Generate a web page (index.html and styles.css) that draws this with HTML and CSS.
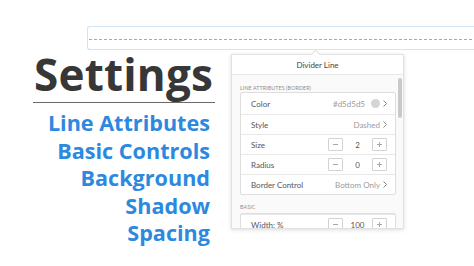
FILE: index.html
```html
<!DOCTYPE html>
<html>
<head>
<meta charset="utf-8">
<link rel="stylesheet" href="styles.css">
</head>
<body>
<div class="page">
  <div class="topbar"><div class="dashline"></div></div>
  <div class="stage">
    <div class="intro">
      <h1 class="title">Settings</h1>
      <ul class="topics">
        <li>Line Attributes</li>
        <li>Basic Controls</li>
        <li>Background</li>
        <li>Shadow</li>
        <li>Spacing</li>
      </ul>
    </div>
    <div class="panel">
      <div class="panel-head">Divider Line</div>
      <div class="panel-body">
        <div class="panel-scroll">
          <div class="section-label">Line Attributes (Border)</div>
          <div class="card">
            <div class="row row-first">
              <span class="row-label">Color</span>
              <span class="row-value"><span class="muted">#d5d5d5</span><span class="swatch"></span><svg class="chev" width="4" height="7" viewBox="0 0 4 7"><polyline points="0.5,0.5 3.5,3.5 0.5,6.5" fill="none" stroke="#8a8a8a" stroke-width="1"/></svg></span>
            </div>
            <div class="row">
              <span class="row-label">Style</span>
              <span class="row-value"><span class="muted">Dashed</span><svg class="chev" width="4" height="7" viewBox="0 0 4 7"><polyline points="0.5,0.5 3.5,3.5 0.5,6.5" fill="none" stroke="#8a8a8a" stroke-width="1"/></svg></span>
            </div>
            <div class="row">
              <span class="row-label">Size</span>
              <span class="stepper"><span class="step"><svg width="7" height="7" viewBox="0 0 7 7"><line x1="1" y1="3.5" x2="6" y2="3.5" stroke="#a8a8a8" stroke-width="1"/></svg></span><span class="step-value">2</span><span class="step"><svg width="7" height="7" viewBox="0 0 7 7"><line x1="1" y1="3.5" x2="6" y2="3.5" stroke="#a8a8a8" stroke-width="1"/><line x1="3.5" y1="1" x2="3.5" y2="6" stroke="#a8a8a8" stroke-width="1"/></svg></span></span>
            </div>
            <div class="row">
              <span class="row-label">Radius</span>
              <span class="stepper"><span class="step"><svg width="7" height="7" viewBox="0 0 7 7"><line x1="1" y1="3.5" x2="6" y2="3.5" stroke="#a8a8a8" stroke-width="1"/></svg></span><span class="step-value">0</span><span class="step"><svg width="7" height="7" viewBox="0 0 7 7"><line x1="1" y1="3.5" x2="6" y2="3.5" stroke="#a8a8a8" stroke-width="1"/><line x1="3.5" y1="1" x2="3.5" y2="6" stroke="#a8a8a8" stroke-width="1"/></svg></span></span>
            </div>
            <div class="row">
              <span class="row-label">Border Control</span>
              <span class="row-value"><span class="muted">Bottom Only</span><svg class="chev" width="4" height="7" viewBox="0 0 4 7"><polyline points="0.5,0.5 3.5,3.5 0.5,6.5" fill="none" stroke="#8a8a8a" stroke-width="1"/></svg></span>
            </div>
          </div>
          <div class="section-label section-label-spaced">Basic</div>
          <div class="card">
            <div class="row">
              <span class="row-label">Width: %</span>
              <span class="stepper"><span class="step"><svg width="7" height="7" viewBox="0 0 7 7"><line x1="1" y1="3.5" x2="6" y2="3.5" stroke="#a8a8a8" stroke-width="1"/></svg></span><span class="step-value">100</span><span class="step"><svg width="7" height="7" viewBox="0 0 7 7"><line x1="1" y1="3.5" x2="6" y2="3.5" stroke="#a8a8a8" stroke-width="1"/><line x1="3.5" y1="1" x2="3.5" y2="6" stroke="#a8a8a8" stroke-width="1"/></svg></span></span>
            </div>
          </div>
        </div>
        <div class="scrollbar"></div>
      </div>
    </div>
  </div>
</div>
</body>
</html>
```

FILE: styles.css
```css
html, body {
  margin: 0;
  padding: 0;
  background: #ffffff;
}
body {
  width: 474px;
  height: 266px;
  overflow: hidden;
  font-family: Lato, "Liberation Sans", sans-serif;
}
.page {
  width: 474px;
  height: 266px;
  overflow: hidden;
}
.topbar {
  margin-left: 87px;
  margin-top: 26px;
  border: 1px solid #d2e4f1;
  border-right: none;
  border-radius: 3px 0 0 3px;
  padding-top: 12px;
  box-sizing: border-box;
  height: 24px;
}
.dashline {
  height: 1px;
  margin-left: 1px;
  background: repeating-linear-gradient(to right, #a8a8a8 0, #a8a8a8 3px, transparent 3px, transparent 5px);
}
.stage {
  display: flex;
  align-items: flex-start;
}
.intro {
  width: 182px;
  margin-left: 33px;
  padding-top: 2px;
}
.title {
  margin: 0;
  font-family: "Open Sans", "Noto Sans", sans-serif;
  font-weight: 700;
  font-size: 44px;
  line-height: 44px;
  letter-spacing: 0.2px;
  text-indent: 1px;
  color: #373737;
  padding-bottom: 6px;
  border-bottom: 1px solid #6a6a6a;
}
.topics {
  list-style: none;
  margin: 6px 0 0;
  padding: 0 5px 0 0;
  text-align: right;
  font-family: "Open Sans", "Noto Sans", sans-serif;
  font-weight: 700;
  font-size: 21.6px;
  line-height: 27.5px;
  color: #2c89df;
}
.panel {
  position: relative;
  margin-left: 16px;
  margin-top: 4px;
  width: 173px;
  height: 175px;
  box-sizing: border-box;
  border: 1px solid #e1e1e1;
  background: #ffffff;
  box-shadow: 0 1px 4px rgba(0, 0, 0, 0.14);
}
.panel::before {
  content: "";
  position: absolute;
  left: 80px;
  top: -4px;
  width: 6px;
  height: 6px;
  background: #ffffff;
  border-left: 1px solid #e1e1e1;
  border-top: 1px solid #e1e1e1;
  transform: rotate(45deg);
}
.panel-head {
  position: relative;
  height: 19px;
  border-bottom: 1px solid #e8e8e8;
  display: flex;
  align-items: center;
  justify-content: center;
  font-size: 8px;
  color: #454545;
  background: #ffffff;
}
.panel-body {
  display: flex;
  height: 153px;
  overflow: hidden;
  background: #fafafa;
}
.panel-scroll {
  flex: 1;
  padding-left: 8px;
}
.scrollbar {
  width: 4px;
  height: 40px;
  margin: 3px 1px 0 2px;
  border-radius: 2px;
  background: #c9c9c9;
}
.section-label {
  padding-top: 9px;
  line-height: 8px;
  font-size: 5.3px;
  text-transform: uppercase;
  color: #8e8e8e;
  letter-spacing: 0.1px;
}
.section-label-spaced {
  padding-top: 8px;
  margin-bottom: 2px;
}
.card {
  background: #ffffff;
  border: 1px solid #dedede;
  border-radius: 2px;
}
.row {
  display: flex;
  align-items: center;
  justify-content: space-between;
  height: 19px;
  padding: 0 8px 0 10px;
  border-top: 1px solid #e9e9e9;
  font-size: 8px;
  color: #555555;
}
.row-first {
  border-top: none;
  height: 21px;
}
.row-value {
  display: flex;
  align-items: center;
}
.muted {
  color: #9b9b9b;
}
.swatch {
  width: 9px;
  height: 9px;
  border-radius: 50%;
  background: #d5d5d5;
  margin: 0 3px 0 6px;
}
.chev {
  display: block;
  margin-left: 3px;
}
.swatch + .chev {
  margin-left: 0;
}
.stepper {
  display: flex;
  align-items: center;
}
.step {
  width: 15px;
  height: 13px;
  box-sizing: border-box;
  border: 1px solid #d3d3d3;
  border-radius: 1px;
  display: flex;
  align-items: center;
  justify-content: center;
  background: #ffffff;
}
.step svg {
  display: block;
}
.step-value {
  width: 29px;
  text-align: center;
  color: #555555;
}
```
